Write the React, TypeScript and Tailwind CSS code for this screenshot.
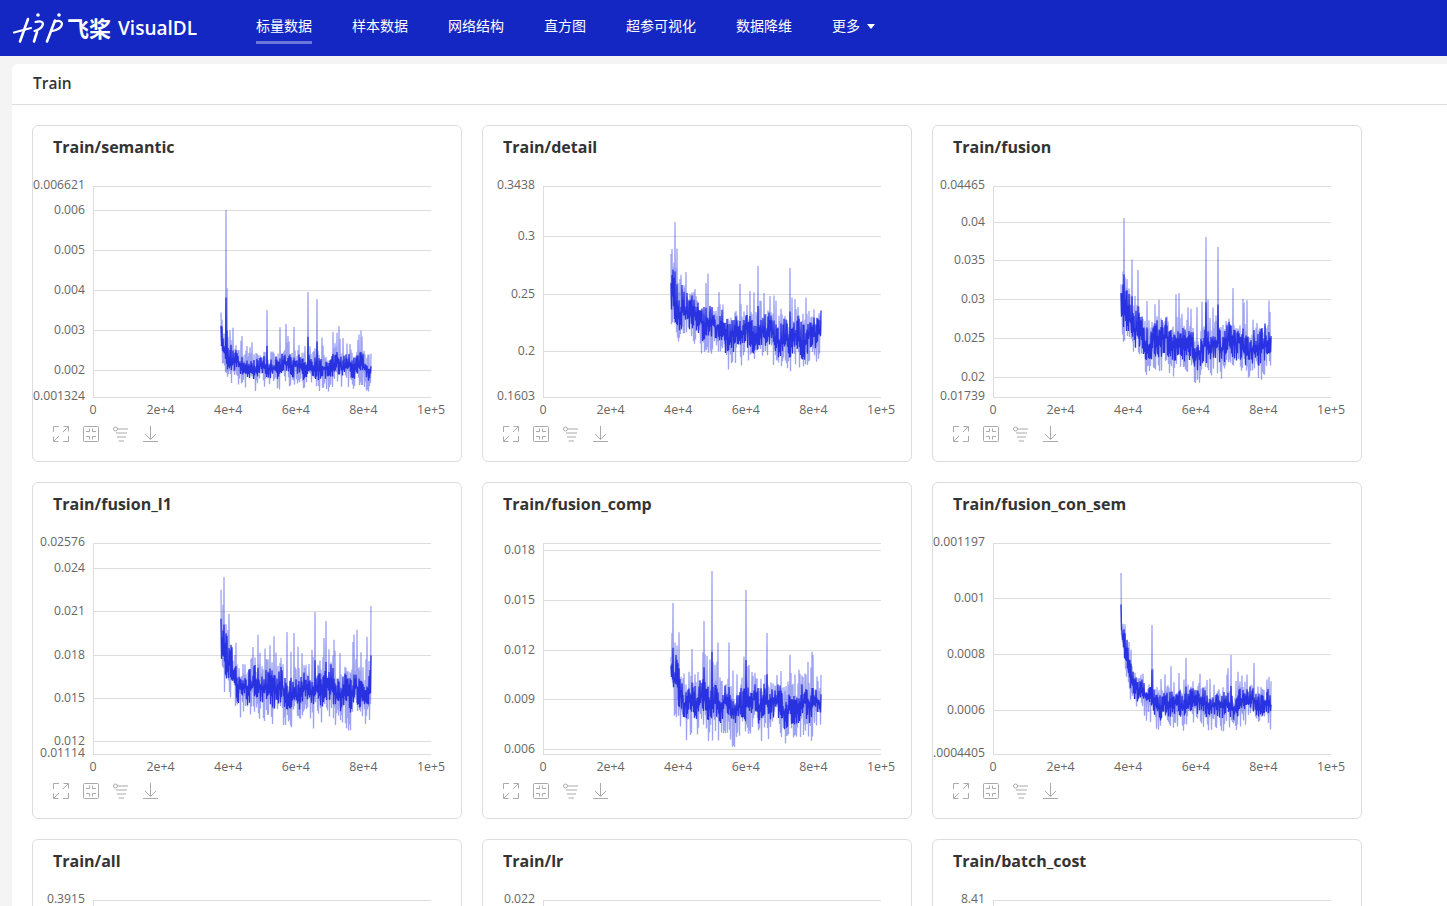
import { useMemo } from 'react';

const FONT = '"Open Sans", "Noto Sans CJK SC", sans-serif';

const navItems = ['标量数据', '样本数据', '网络结构', '直方图', '超参可视化', '数据降维'];
const xTicks = ['0', '2e+4', '4e+4', '6e+4', '8e+4', '1e+5'];

interface Spike {
  at: number;
  y: number;
}

interface ChartConfig {
  title: string;
  ticks: [string, number][];
  lines?: number[];
  seed: number;
  start: number; // mean y at the first point
  end: number; // mean y once settled
  tau: number;
  dark: number;
  light: number;
  up: number;
  spikes: Spike[];
}

// y values are measured in pixels from the top gridline of the plot
const charts: ChartConfig[] = [
  {
    title: 'Train/semantic',
    ticks: [['0.006621', 0], ['0.006', 24], ['0.005', 64], ['0.004', 104], ['0.003', 144], ['0.002', 184], ['0.001324', 211]],
    seed: 11, start: 150, end: 181, tau: 5, dark: 12, light: 22, up: 26,
    spikes: [{ at: 5, y: 24 }, { at: 6, y: 102 }, { at: 87, y: 106 }, { at: 96, y: 113 }, { at: 46, y: 124 }],
  },
  {
    title: 'Train/detail',
    ticks: [['0.3438', 0], ['0.3', 50], ['0.25', 108], ['0.2', 165], ['0.1603', 211]],
    seed: 23, start: 108, end: 152, tau: 30, dark: 20, light: 32, up: 34,
    spikes: [{ at: 4, y: 36 }, { at: 35, y: 97 }, { at: 87, y: 80 }, { at: 119, y: 82 }],
  },
  {
    title: 'Train/fusion',
    ticks: [['0.04465', 0], ['0.04', 36], ['0.035', 74], ['0.03', 113], ['0.025', 152], ['0.02', 191], ['0.01739', 211]],
    seed: 37, start: 115, end: 160, tau: 16, dark: 20, light: 32, up: 34,
    spikes: [{ at: 3, y: 32 }, { at: 85, y: 51 }, { at: 97, y: 61 }, { at: 17, y: 84 }],
  },
  {
    title: 'Train/fusion_l1',
    ticks: [['0.02576', 0], ['0.024', 25], ['0.021', 68], ['0.018', 112], ['0.015', 155], ['0.012', 198], ['0.01114', 211]],
    seed: 41, start: 100, end: 148, tau: 12, dark: 20, light: 36, up: 42,
    spikes: [{ at: 3, y: 34 }, { at: 150, y: 63 }, { at: 94, y: 69 }, { at: 105, y: 78 }],
  },
  {
    title: 'Train/fusion_comp',
    ticks: [['0.018', 7], ['0.015', 57], ['0.012', 107], ['0.009', 156], ['0.006', 206]],
    lines: [0, 7, 57, 107, 156, 206, 211],
    seed: 53, start: 125, end: 162, tau: 8, dark: 19, light: 36, up: 46,
    spikes: [{ at: 41, y: 28 }, { at: 75, y: 47 }, { at: 2, y: 60 }, { at: 96, y: 90 }, { at: 33, y: 78 }],
  },
  {
    title: 'Train/fusion_con_sem',
    ticks: [['0.001197', 0], ['0.001', 55], ['0.0008', 111], ['0.0006', 167], ['0.0004405', 211]],
    seed: 67, start: 82, end: 161, tau: 9, dark: 14, light: 26, up: 24,
    spikes: [{ at: 0, y: 30 }, { at: 31, y: 82 }, { at: 65, y: 115 }, { at: 110, y: 112 }],
  },
  {
    title: 'Train/all',
    ticks: [['0.3915', 0], ['0.35', 40], ['0.3', 90], ['0.25', 140], ['0.2', 190]],
    lines: [0, 40, 90, 140, 190, 211],
    seed: 71, start: 100, end: 150, tau: 12, dark: 12, light: 24, up: 34,
    spikes: [],
  },
  {
    title: 'Train/lr',
    ticks: [['0.022', 0], ['0.02', 30], ['0.015', 90], ['0.01', 150]],
    lines: [0, 30, 90, 150, 211],
    seed: 73, start: 20, end: 190, tau: 90, dark: 0, light: 0, up: 0,
    spikes: [],
  },
  {
    title: 'Train/batch_cost',
    ticks: [['8.41', 0], ['6', 60], ['4', 110], ['2', 160]],
    lines: [0, 60, 110, 160, 211],
    seed: 79, start: 190, end: 195, tau: 10, dark: 2, light: 3, up: 6,
    spikes: [],
  },
];

function rng(seed: number) {
  let a = seed * 2654435 + 99;
  return () => {
    a = (a + 0x6d2b79f5) | 0;
    let t = Math.imul(a ^ (a >>> 15), 1 | a);
    t = (t + Math.imul(t ^ (t >>> 7), 61 | t)) ^ t;
    return ((t ^ (t >>> 14)) >>> 0) / 4294967296;
  };
}

const PLOT_LEFT = 60;
const PLOT_TOP = 16;
const PLOT_W = 338;
const PLOT_H = 211;
const DATA_LEFT = 128;
const DATA_W = 150;
const STEPS_PER_PX = 2;

function buildSeries(c: ChartConfig) {
  const rand = rng(c.seed);
  const phase = [rand() * 6.28, rand() * 6.28, rand() * 6.28];
  const light: string[] = [];
  const dark: string[] = [];
  const pt = (x: number, y: number) => `${x.toFixed(2)},${(y + PLOT_TOP).toFixed(1)}`;

  for (let n = 0; n <= DATA_W * STEPS_PER_PX; n++) {
    const i = n / STEPS_PER_PX;
    const x = PLOT_LEFT + DATA_LEFT + i;
    const mean = c.end + (c.start - c.end) * Math.exp(-i / c.tau);
    const wob = (Math.sin(i / 4 + phase[0]) + Math.sin(i / 9 + phase[1]) + Math.sin(i / 2 + phase[2])) * c.dark * 0.15;
    const center = mean + wob;
    const early = i < 12 ? 1.5 : 1;
    const up = n % 2 === 0;

    let lightY = up
      ? center - rand() * c.light * 0.8 * early - (rand() < 0.3 ? rand() * c.up : 0)
      : center + rand() * c.light;
    let darkY = up ? center - rand() * c.dark * early : center + rand() * c.dark * 0.9;

    const spike = c.spikes.find((s) => s.at === i);
    if (spike) {
      lightY = spike.y;
      darkY = center - (center - spike.y) * 0.4;
    }
    light.push(pt(x, lightY));
    dark.push(pt(x, darkY));
  }
  return { light: light.join(' '), dark: dark.join(' ') };
}

function PaddleLogo() {
  return (
    <svg width="52" height="32" viewBox="12 10 52 32" className="shrink-0">
      <g fill="none" stroke="#fff" strokeWidth="2.6" strokeLinecap="round">
        <path d="M14 30.5 L31 26" strokeWidth="2.2" />
        <path d="M20 39.5 L28 17" />
        <path d="M34 39.5 L37 30" />
        <path d="M35.5 20 C41 18.5 44 20 42.5 23.5 C41.5 26 38 28 34.5 29" strokeWidth="2.2" />
        <path d="M47 39.5 L55 18.5" />
        <path d="M55 19.5 C60 18 63 20 61.5 23.5 C60.5 26 57 28 52.5 29" strokeWidth="2.2" />
      </g>
      <circle cx="38" cy="13" r="1.8" fill="#fff" />
      <circle cx="59" cy="13" r="1.8" fill="#fff" />
    </svg>
  );
}

function NavBar() {
  return (
    <header className="flex h-14 shrink-0 items-center bg-[#1527c2] pl-3 text-white">
      <PaddleLogo />
      <span className="ml-[3px] text-[22px] font-bold leading-none">飞桨</span>
      <span className="ml-[7px] text-[19px] font-semibold leading-none">VisualDL</span>
      <nav className="ml-[59px] flex h-14 items-center gap-10 pb-[5px] text-sm">
        {navItems.map((item, i) => (
          <a key={item} className="relative flex h-14 items-center">
            {item}
            {i === 0 && <span className="absolute bottom-[10px] left-0 h-[3px] w-full bg-[#6a76d8]" />}
          </a>
        ))}
        <a className="flex h-14 items-center">
          更多
          <span className="ml-[7px] mt-[2px] h-0 w-0 border-x-[4px] border-t-[5px] border-x-transparent border-t-white" />
        </a>
      </nav>
    </header>
  );
}

function ToolIcons() {
  return (
    <div className="mt-[6px] flex gap-[14px] pl-5 text-[#aaaaaa]">
      <svg width="16" height="16" viewBox="0 0 16 16" fill="none" stroke="currentColor">
        <path d="M6 .5H.5V6M10 15.5h5.5V10M.8 15.2 6 10M.5 10.5v5H5.5M15.2.8 10 6M10.5.5h5v5" />
      </svg>
      <svg width="16" height="16" viewBox="0 0 16 16" fill="none" stroke="currentColor">
        <rect x=".5" y=".5" width="15" height="15" rx="1" />
        <path d="M3 5.5h3.5v-3M13 5.5H9.5v-3M3 10.5h3.5v3M13 10.5H9.5v3" />
      </svg>
      <svg width="16" height="16" viewBox="0 0 16 16" fill="none" stroke="currentColor">
        <circle cx="2.5" cy="3" r="2" />
        <path d="M4.5 3H15M3 7h11M4 11h9M5.5 15H11" />
      </svg>
      <svg width="16" height="16" viewBox="0 0 16 16" fill="none" stroke="currentColor">
        <path d="M7.5 0v13M2 8l5.5 5.5L13 8M0 15.5h15" />
      </svg>
    </div>
  );
}

function ChartCard({ chart }: { chart: ChartConfig }) {
  const series = useMemo(() => buildSeries(chart), [chart]);
  const lines = chart.lines ?? chart.ticks.map((t) => t[1]);
  return (
    <div className="h-[337px] rounded-md border border-[#dddddd] bg-white">
      <h3 className="flex h-[44px] items-center pb-[3px] pl-5 text-base font-bold text-[#333333]">{chart.title}</h3>
      <svg width="428" height="250" className="block overflow-hidden">
        {lines.map((l) => (
          <line key={l} x1={PLOT_LEFT} x2={PLOT_LEFT + PLOT_W} y1={PLOT_TOP + l + 0.5} y2={PLOT_TOP + l + 0.5} stroke="#dddddd" />
        ))}
        <line x1={PLOT_LEFT + 0.5} x2={PLOT_LEFT + 0.5} y1={PLOT_TOP} y2={PLOT_TOP + PLOT_H} stroke="#dddddd" />
        {chart.ticks.map(([label, y]) => (
          <text key={label} x={52} y={PLOT_TOP + y + (y === 0 || y === PLOT_H ? 3.4 : 4.2)} textAnchor="end" fontSize="12.2" fill="#666666">
            {label}
          </text>
        ))}
        {xTicks.map((label, i) => (
          <text key={label} x={PLOT_LEFT + (PLOT_W / 5) * i} y={244} textAnchor="middle" fontSize="12.4" fill="#666666">
            {label}
          </text>
        ))}
        <polyline points={series.light} fill="none" stroke="#2932e1" strokeOpacity="0.45" strokeWidth="1.3" />
        <polyline points={series.dark} fill="none" stroke="#2932e1" strokeWidth="1.3" />
      </svg>
      <ToolIcons />
    </div>
  );
}

export default function App() {
  return (
    <div className="flex h-screen flex-col overflow-hidden bg-[#f4f4f4]" style={{ fontFamily: FONT }}>
      <NavBar />
      <main className="ml-3 mt-2 flex-1 rounded-tl-md bg-white">
        <div className="flex h-[41px] items-center border-b border-[#dddddd] pb-[1px] pl-[21px] text-[15.5px] font-semibold text-[#333333]">
          Train
        </div>
        <div className="grid grid-cols-[repeat(3,430px)] gap-5 pl-5 pt-5">
          {charts.map((chart) => (
            <ChartCard key={chart.title} chart={chart} />
          ))}
        </div>
      </main>
    </div>
  );
}
